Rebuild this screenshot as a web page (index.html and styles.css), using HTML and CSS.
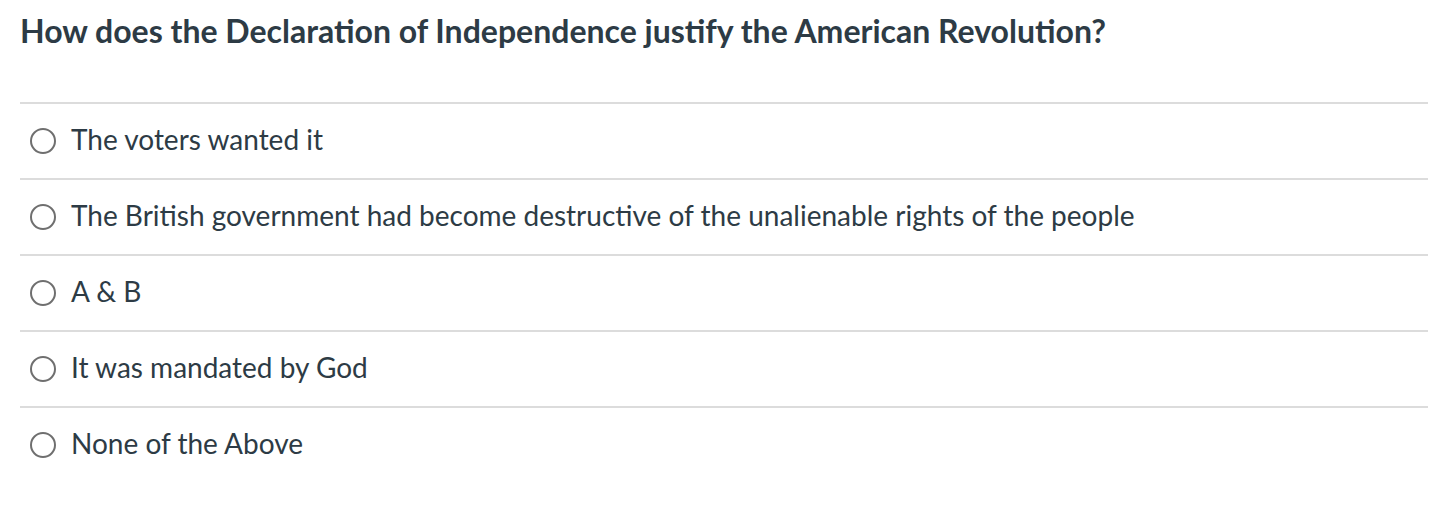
FILE: index.html
```html
<!DOCTYPE html>
<html>
<head>
<meta charset="utf-8">
<link rel="stylesheet" href="styles.css">
</head>
<body>
<div class="quiz">
  <h1 class="question">How does the Declaration of Independence justify the American Revolution?</h1>
  <div class="answers">
    <label class="answer"><span class="radio"></span><span class="text">The voters wanted it</span></label>
    <label class="answer"><span class="radio"></span><span class="text">The British government had become destructive of the unalienable rights of the people</span></label>
    <label class="answer"><span class="radio"></span><span class="text">A &amp; B</span></label>
    <label class="answer"><span class="radio"></span><span class="text">It was mandated by God</span></label>
    <label class="answer"><span class="radio"></span><span class="text">None of the Above</span></label>
  </div>
</div>
</body>
</html>
```
FILE: styles.css
```css
html, body {
  margin: 0;
  padding: 0;
  background: #fff;
}
body {
  font-family: Lato, "Open Sans", sans-serif;
  color: #2d3b45;
}
.quiz {
  width: 1408px;
  padding: 0 0 0 20px;
}
.question {
  margin: 0;
  padding-top: 11px;
  height: 102px;
  box-sizing: border-box;
  font-size: 32px;
  font-weight: 700;
  line-height: 40px;
}
.answers {
  display: flex;
  flex-direction: column;
}
.answer {
  display: flex;
  align-items: center;
  height: 76px;
  box-sizing: border-box;
  border-top: 2px solid #dcdcdc;
}
.radio {
  width: 22px;
  height: 22px;
  border: 2px solid #6f6f6f;
  border-radius: 50%;
  margin-left: 10px;
  margin-right: 15px;
  flex: none;
}
.text {
  font-size: 28px;
  line-height: 34px;
  margin-bottom: 4px;
}
```
